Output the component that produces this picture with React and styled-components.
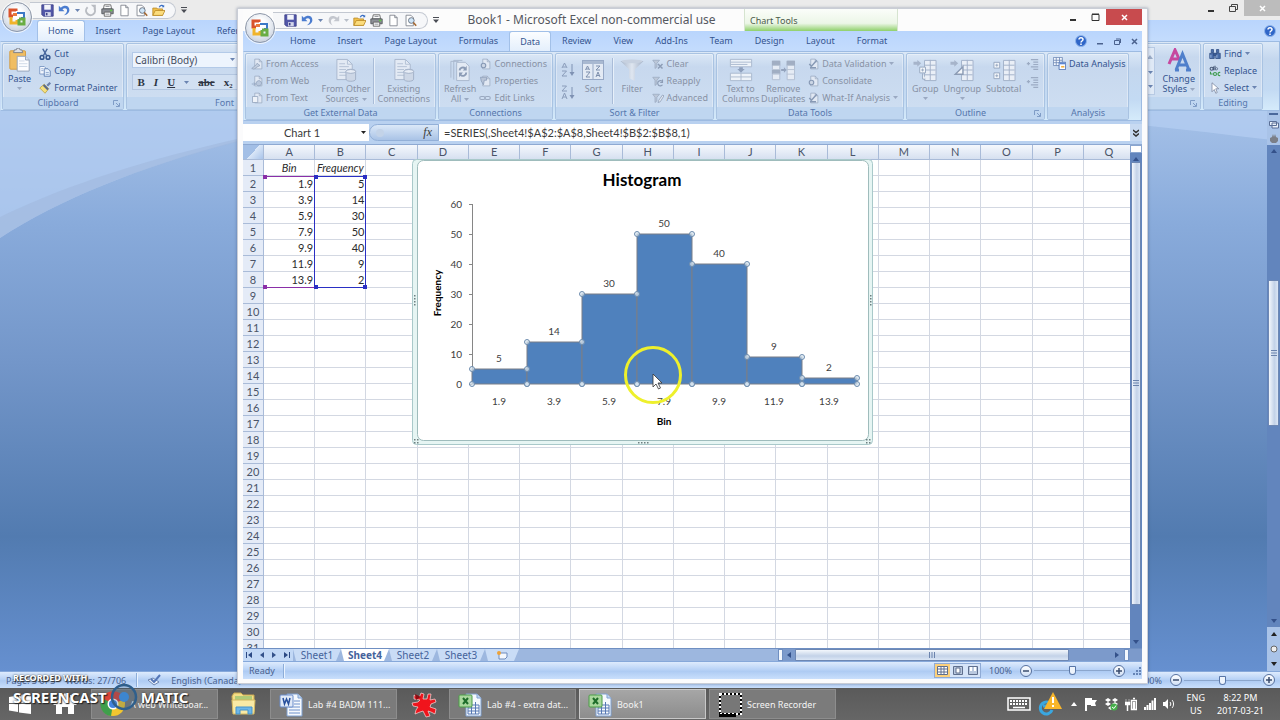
import { Fragment } from "react";
import styled, { createGlobalStyle, css } from "styled-components";

const UI = `"Noto Sans", "Open Sans", sans-serif`;
const SHEET = `Lato, "Open Sans", sans-serif`;
const INK = "#34548f";
const MUTED = "#8892a5";

const GlobalStyle = createGlobalStyle`
    * {
        box-sizing: border-box;
    }
    body {
        margin: 0;
        overflow: hidden;
        font-family: ${UI};
        font-size: 9px;
        color: ${INK};
    }
    button, input, select {
        font: inherit;
        color: inherit;
        background: none;
        border: 0;
        padding: 0;
        margin: 0;
    }
    svg {
        display: block;
        flex: none;
    }
`;

/* ---------- icons ---------- */

const Icon = ({ size = 13, children }) => (
    <svg width={size} height={size} viewBox="0 0 16 16" fill="none" aria-hidden="true">
        {children}
    </svg>
);

const SaveIcon = () => (
    <Icon>
        <path d="M1 1h14v14H3l-2-2z" fill="#5257a8" stroke="#3c3f86" />
        <path d="M4 1h8v6H4z" fill="#f3f5fb" />
        <path d="M5 10h7v5H5z" fill="#d3d6ea" />
        <path d="M6 11h2v3H6z" fill="#3c3f86" />
    </Icon>
);
const UndoIcon = () => (
    <Icon>
        <path d="M1 2v7h7L5.500 6.500C8 4 12 5 11 9c-.4 2-2 4-4 5 4-.5 7-3 7-6.500C14 2 8 .5 3.500 4.500z" fill="#4b7ccf" />
    </Icon>
);
const RepeatIcon = () => (
    <Icon>
        <path d="M4.500 4a5.500 5.500 0 1 0 8 1" stroke="#b9bcc2" strokeWidth="2.500" />
        <path d="M8.500 1h6v6z" fill="#b9bcc2" />
    </Icon>
);
const RedoIcon = () => (
    <Icon>
        <path d="M15 2v7H8l2.500-2.500C8 4 4 6 5 10c0 1 1 3 2 4-4-2-5-4-5-6C2 2 8 1 12.500 4.500z" fill="#c4c7ce" />
    </Icon>
);
const PrintIcon = () => (
    <Icon>
        <path d="M4 1h8l1 5H3z" fill="#fff" stroke="#555" />
        <path d="M1 6h14v6H1z" fill="#8d9097" stroke="#4c4f55" />
        <path d="M4 10h8v5H4z" fill="#fff" stroke="#555" />
        <path d="M11 7h3v2h-3z" fill="#62c04c" />
        <path d="M5.500 3h5M5.500 12.500h5" stroke="#7b8088" />
    </Icon>
);
const PageIcon = () => (
    <Icon>
        <path d="M3.500 1.500h6l3 3v10h-9z" fill="#fff" stroke="#777c86" />
        <path d="M9.500 1.500v3h3" stroke="#777c86" />
    </Icon>
);
const PreviewIcon = () => (
    <Icon>
        <path d="M2.500 1.500h6l3 3v10h-9z" fill="#fff" stroke="#777c86" />
        <circle cx="9" cy="8" r="3.500" fill="#cfe5f7" stroke="#5b6472" />
        <path d="M11.500 10.500l3.500 4" stroke="#a5672f" strokeWidth="2" />
    </Icon>
);
const FolderIcon = () => (
    <Icon>
        <path d="M1 5h5l1 1h6v8H1z" fill="#f2c04a" stroke="#b98a28" />
        <path d="M1 14l3-6h12l-3 6z" fill="#fbdc7d" stroke="#b98a28" />
        <path d="M9 4c1-3 4-3 5-1" stroke="#3b6fc4" strokeWidth="1.500" />
        <path d="M15 1v3h-3z" fill="#3b6fc4" />
    </Icon>
);
const Caret = ({ color = "#6b84b1" }) => (
    <svg width="5" height="3" viewBox="0 0 5 3" aria-hidden="true"><path d="M0 0h5L2.500 3z" fill={color} /></svg>
);
const MoreIcon = () => (
    <svg width="6" height="6" viewBox="0 0 6 6" aria-hidden="true"><path d="M0 0h6v1H0zM0 2.500h6L3 6z" fill="#4a4d55" /></svg>
);
const OfficeLogo = () => (
    <svg width="20" height="20" viewBox="0 0 20 20" fill="none" aria-hidden="true">
        <path d="M9 4V3H3v6h3" stroke="#d9532c" strokeWidth="3" />
        <path d="M10 6h7v5h-3" stroke="#3c79c6" strokeWidth="2" />
        <path d="M4 10v6h6v-3" stroke="#f0b32a" strokeWidth="3" />
        <path d="M12 17h5v-5h-5z" stroke="#69ad43" strokeWidth="3" />
        <path d="M6 6h4v3H6z" fill="#e8793c" />
        <path d="M9 9h3v3H9z" fill="#fff" />
    </svg>
);
const HelpIcon = () => (
    <svg width="12" height="12" viewBox="0 0 12 12" fill="none" aria-hidden="true">
        <circle cx="6" cy="6" r="5.500" fill="#2f66c8" stroke="#8fb4ea" />
        <path d="M4 4.500C4 2 8 2 8 4.500 8 6 6 6 6 7.500M6 8.500V10" stroke="#fff" strokeWidth="1.500" />
    </svg>
);
const LauncherIcon = () => (
    <svg width="7" height="7" viewBox="0 0 7 7" fill="none" aria-hidden="true">
        <path d="M.5 5V.5H5M3 3l3 3M6.500 3v3.500H3" stroke="#7f9cc6" />
    </svg>
);

const PasteIcon = () => (
    <svg width="23" height="24" viewBox="0 0 23 26" fill="none" aria-hidden="true">
        <rect x="1" y="3" width="17" height="20" rx="1" fill="#f0bd62" stroke="#d29b42" />
        <path d="M5 5l1-3h2a2 2 0 0 1 4 0h2l1 3z" fill="#dde0e6" stroke="#777d88" />
        <path d="M9 9h9l4 4v12H9z" fill="#fdfdff" stroke="#93a2b9" />
        <path d="M18 9v4h4" fill="#dbe5f3" stroke="#93a2b9" />
        <path d="M11 14h6M11 17h9M11 20h9" stroke="#ccd6e5" />
    </svg>
);
const CutIcon = () => (
    <Icon size={12}>
        <path d="M5 1l5 9M11 1L6 10" stroke="#46659c" strokeWidth="2" />
        <circle cx="4" cy="12.500" r="2.500" stroke="#35578f" strokeWidth="2" />
        <circle cx="12" cy="12.500" r="2.500" stroke="#35578f" strokeWidth="2" />
    </Icon>
);
const CopyIcon = () => (
    <Icon size={12}>
        <path d="M1 2h6l2 2v8H1z" fill="#f5f9ff" stroke="#6787b8" />
        <path d="M7 5h5l3 3v7H7z" fill="#e3eefb" stroke="#4a6ea8" />
        <path d="M3 5h3M3 7.500h3M9 10h4M9 12.500h4" stroke="#7d9ac4" />
    </Icon>
);
const BrushIcon = () => (
    <Icon size={12}>
        <path d="M11 5l4-4" stroke="#6a7faa" strokeWidth="3" />
        <path d="M7 3l6 6-5 6-7-7z" fill="#f6e07d" stroke="#b79c3b" />
        <path d="M6 4l6 6" stroke="#59698a" strokeWidth="2.500" />
    </Icon>
);
const StylesIcon = () => (
    <svg width="24" height="24" viewBox="0 0 24 24" fill="none" aria-hidden="true">
        <path d="M2 16L8 2l5 11M4.500 11h7" stroke="#c6489f" strokeWidth="3" />
        <path d="M9 22l6.500-16L22 22M11.500 17h9M8 22h4M19 22h5" stroke="#4f7fcb" strokeWidth="3" />
    </svg>
);
const FindIcon = () => (
    <Icon size={12}>
        <path d="M3 2h3v4H3zM10 2h3v4h-3zM1 7h6v7H1zM9 7h6v7H9zM6 7h4v3H6z" fill="#496da9" stroke="#2e4c82" />
        <path d="M2.500 9v4M10.500 9v4" stroke="#b6cef0" />
    </Icon>
);
const ReplaceIcon = () => (
    <Icon size={12}>
        <circle cx="3.500" cy="5" r="2" stroke="#4b5d7c" strokeWidth="1.500" />
        <path d="M6 2v5M8 1v6" stroke="#4b5d7c" strokeWidth="1.500" />
        <circle cx="10" cy="5" r="1.500" stroke="#4b5d7c" />
        <circle cx="8" cy="12" r="2" stroke="#3b9b4b" strokeWidth="1.500" />
        <path d="M15 10c-4-1-4 5 0 4M2 9v3h3" stroke="#3b9b4b" strokeWidth="1.500" />
    </Icon>
);
const PointerIcon = () => (
    <Icon size={12}><path d="M4 1v12l3-3 2 5 2-1-2-5h4z" fill="#fff" stroke="#75829b" /></Icon>
);

const G = "#9aa9c0";
const SmallDocIcon = ({ kind }) => (
    <Icon size={12}>
        <path d="M5 1.500h6l3.500 3.500v9.500H5z" fill="#e1e8f3" stroke={G} />
        <path d="M11 1.500V5h3.500" stroke={G} />
        {kind === "access" && <path d="M1 14l6-5 1-2 4 3-4 2-4 3z" fill="#c3cede" stroke="#8fa0ba" />}
        {kind === "web" && <path d="M10 7.500a3.500 3.500 0 1 0 1 0zM1 12h5M4 10l2 2-2 2" fill="#b9c7dc" stroke="#8a9cb8" />}
        {kind === "text" && <path d="M2 6h7v8H2z" fill="#eef2f8" stroke="#8fa0ba" />}
        {kind === "check" && <path d="M3 8l3 3 7-8M4 13h8" stroke="#8799b5" strokeWidth="2" />}
        {kind === "gear" && <circle cx="6" cy="10" r="3" fill="#ccd6e5" stroke="#8799b5" strokeWidth="1.500" />}
        {kind === "hand" && <path d="M2 3h8v4H7l-1 6-3-5z" fill="#b9c5d8" stroke="#8799b5" />}
    </Icon>
);
const LinkIcon = () => (
    <Icon size={12}>
        <rect x="1" y="6" width="7" height="4" rx="2" stroke={G} strokeWidth="1.500" />
        <rect x="8" y="6" width="7" height="4" rx="2" stroke={G} strokeWidth="1.500" />
    </Icon>
);
const FunnelSmall = ({ kind }) => (
    <Icon size={12}>
        <path d="M1 3h9L6.500 7v5L4 14V7z" fill="#bcc7d8" stroke={G} />
        {kind === "clear" && <path d="M8 8l6 6M14 8l-6 6" stroke="#8c9cb5" strokeWidth="2" />}
        {kind === "reapply" && <path d="M14 9a3.500 3.500 0 1 0 0 4M14 6v4h-3" stroke="#8c9cb5" strokeWidth="1.500" />}
        {kind === "advanced" && <path d="M8 14l1-3 5-7 2 1-5 8z" fill="#e2e8f1" stroke="#8c9cb5" />}
    </Icon>
);
const DbPageIcon = () => (
    <svg width="24" height="24" viewBox="0 0 24 25" fill="none" aria-hidden="true">
        <path d="M2.500 1.500h11l5 5v16h-16z" fill="#e3eaf4" stroke="#a9b8ce" />
        <path d="M13.500 1.500v5h5M5 6h6M5 9h10M5 12h7M5 15h7M5 18h7" stroke="#b4c1d5" />
        <path d="M12 14c0-3 10-3 10 0v8c0 3-10 3-10 0z" fill="#cdd7e6" stroke="#a2b1c8" />
        <ellipse cx="17" cy="14" rx="5" ry="2" fill="#e7edf6" stroke="#a2b1c8" />
    </svg>
);
const RefreshIcon = () => (
    <svg width="24" height="24" viewBox="0 0 24 25" fill="none" aria-hidden="true">
        <path d="M2.500 20.500v-17h8M5.500 22.500v-20h9" stroke="#a9b8ce" />
        <path d="M8.500 4.500h9l4 4v15h-13z" fill="#e3eaf4" stroke="#a9b8ce" />
        <path d="M11.500 13a3.500 3.500 0 0 1 6-2M18.500 15a3.500 3.500 0 0 1-6 2.500" stroke="#8b9bb5" strokeWidth="2" />
        <path d="M19 8v5h-4zM11 20v-5h4z" fill="#8b9bb5" />
    </svg>
);
const SortIcon = () => (
    <svg width="24" height="24" viewBox="0 0 24 24" fill="none" aria-hidden="true">
        <rect x="1.500" y="2.500" width="21" height="19" fill="#e3eaf4" stroke="#97a9c6" />
        <path d="M2 3h20v3H2z" fill="#a9b9d1" />
        <path d="M12 6v16" stroke="#97a9c6" />
        <path d="M4.500 12L6.500 8l2 4M5 11h3M15 8h4l-4 4h4M5 14h4l-4 5h4M15 19l2-5 2 5M15.500 17.500h3" stroke="#7f90ad" />
    </svg>
);
const AzIcon = ({ down }) => (
    <svg width="14" height="15" viewBox="0 0 14 15" fill="none" aria-hidden="true">
        {down
            ? <path d="M1 6l2.500-5L6 6M2 5h3M1 9h4.500L1 14h5" stroke="#8a9cba" />
            : <path d="M1 1h4.500L1 6h5M1 14l2.500-6L6 14M2 12h3" stroke="#8a9cba" />}
        <path d="M11 2v10" stroke="#7f92b3" />
        <path d="M8.500 10h5L11 14z" fill="#7f92b3" />
    </svg>
);
const FunnelIcon = () => (
    <svg width="26" height="24" viewBox="0 0 26 25" fill="none" aria-hidden="true">
        <defs>
            <linearGradient id="funnel"><stop stopColor="#a7b5ca" /><stop offset=".5" stopColor="#dfe6f0" /><stop offset="1" stopColor="#a3b1c7" /></linearGradient>
        </defs>
        <path d="M1 3h24l-9 9v12l-6-3v-9z" fill="url(#funnel)" />
        <ellipse cx="13" cy="3.500" rx="11" ry="2" fill="#c7d1e0" />
    </svg>
);
const TextColumnsIcon = () => (
    <svg width="26" height="24" viewBox="0 0 26 26" fill="none" aria-hidden="true">
        <path d="M1.500 1.500h23v8h-23zM1.500 16.500h23v8h-23z" fill="#eef3f9" stroke="#a9b8ce" />
        <path d="M2 4.500h22M2 7h18M2 20.500h22M13 16.500v8" stroke="#a9b8ce" />
        <path d="M11 10h4v2h2l-4 4-4-4h2z" fill="#8fa0bc" />
    </svg>
);
const DuplicatesIcon = () => (
    <svg width="28" height="24" viewBox="0 0 28 26" fill="none" aria-hidden="true">
        <path d="M2.500 3.500h8v20h-8zM18.500 3.500h8v20h-8z" fill="#e6ecf5" stroke="#b0bdd1" />
        <path d="M2 3h9v5H2zM2 13h9v4H2zM18 3h9v5h-9z" fill="#a1aec3" />
        <path d="M3 8h8M3 12.500h8M3 17.500h8M18 8h8M18 12.500h8M18 17.500h8" stroke="#b6c2d4" />
        <path d="M12 12h3v-2l3 3-3 3v-2h-3z" fill="#93a3bd" />
    </svg>
);
const GroupIcon = ({ kind }) => (
    <svg width="26" height="24" viewBox="0 0 26 25" fill="none" aria-hidden="true">
        <path d="M12.500 2.500h12v21h-12z" fill="#eaeff7" stroke="#a3b2ca" />
        <path d="M12 7.500h12M12 12.500h12M12 17.500h12M18.500 2v21" stroke="#a3b2ca" />
        {kind !== "subtotal" && <path d="M1 4h4V2l4 3.500L5 9V7H1z" fill="#a6b4ca" />}
        {kind === "group" && <path d="M7.500 9.500h6v6h-6zM9 12.500h3M10.500 11v3M10.500 16v6h3" fill="#f4f7fb" stroke="#97a7c0" />}
        {kind === "ungroup" && <path d="M6 17l8-8v8z" fill="#f4f7fb" stroke="#8c9cb5" strokeWidth="1.500" />}
        {kind === "subtotal" && <path d="M2.500 4.500h6v6h-6zM4 7.500h3M5.500 6v3M2.500 15.500h6v6h-6zM4 18.500h3M5.500 17v3" fill="#f4f7fb" stroke="#97a7c0" />}
    </svg>
);
const DetailIcon = () => (
    <Icon size={13}>
        <path d="M1 7h4M3 5v4M6 2h9M9 5h6M9 8h6M6 11h9M9 14h6" stroke="#9cabc3" strokeWidth="1.500" />
    </Icon>
);
const AnalysisIcon = () => (
    <Icon>
        <path d="M.5.5h11v10H.5zM.5 4h11M4 .5v10M8 .5v10M.5 7h11" fill="#f3f7fd" stroke="#6c87b5" />
        <path d="M7.500 6.500h8v9h-8z" fill="#fff" stroke="#3f66ae" />
        <path d="M8 7h7v2H8z" fill="#5b86d1" />
        <path d="M10 12h4" stroke="#f2b13e" strokeWidth="2" />
    </Icon>
);

/* ---------- shared window parts ---------- */

const Desktop = styled.main`
    position: relative;
    display: flex;
    flex-direction: column;
    height: 100vh;
    background: #606060;
`;

const WordWindow = styled.section`
    flex: 1;
    min-height: 0;
    display: flex;
    flex-direction: column;
    position: relative;
    background: #bfdbff;
`;

const ExcelWindow = styled.section`
    position: absolute;
    top: 8px;
    left: 237px;
    right: 132px;
    bottom: 36px;
    display: flex;
    flex-direction: column;
    padding: 0 5px 4px;
    background: #fbfbfc;
    border: 1px solid #c9cdd6;
    box-shadow: 0 0 3px rgba(30, 50, 90, 0.4);
`;

const TitleBar = styled.header`
    display: flex;
    align-items: center;
    height: ${props => (props.$active ? 22 : 20)}px;
    padding-left: 30px;
    background: ${props => (props.$active ? "#fcfcfc" : "#ebebeb")};
`;

const OfficeButton = styled.button`
    position: absolute;
    top: ${props => (props.$active ? 4 : 2)}px;
    left: ${props => (props.$active ? 7 : 2)}px;
    z-index: 2;
    display: grid;
    place-items: center;
    width: 30px;
    height: 30px;
    border-radius: 50%;
    border: 1px solid #8d97a8;
    background: radial-gradient(circle at 50% 35%, #ffffff 20%, #dde3ec 60%, #b7c0cf);
    box-shadow: 0 0 0 1px rgba(255, 255, 255, 0.7);
`;

const QuickAccess = styled.div`
    display: flex;
    align-items: center;
    gap: 4px;
    height: 17px;
    padding: 0 10px 0 11px;
    border: 1px solid #c3c8d1;
    border-left: 0;
    border-radius: 0 9px 9px 0;
    background: #f6f7f9;
    margin-right: 5px;
    button {
        display: grid;
        place-items: center;
    }
`;

const Title = styled.h1`
    flex: 1;
    margin: 0;
    text-align: center;
    font-size: 12px;
    line-height: 22px;
    font-weight: 400;
    color: #55585f;
    white-space: nowrap;
`;

const ChartTools = styled.div`
    width: 154px;
    height: 22px;
    padding-left: 5px;
    line-height: 24px;
    color: #4b5a4b;
    border: solid #d6e4d0;
    border-width: 0 1px;
    background: linear-gradient(#fbfdfa, #ecf6e7 65%, #8fd06a);
`;

const Controls = styled.div`
    display: flex;
    justify-content: flex-end;
    align-self: flex-start;
    flex: ${props => (props.$active ? "0 0 244px" : "1")};
`;

const ControlButton = styled.button`
    display: grid;
    place-items: center;
    width: ${props => (props.$close ? 36 : 22)}px;
    height: 16px;
    ${props => props.$close && css`
        background: ${props.$close};
    `}
`;

const TabStrip = styled.nav`
    display: flex;
    height: ${props => (props.$active ? 20 : 21)}px;
    padding-left: ${props => (props.$active ? 36 : 37)}px;
    background: linear-gradient(#b9d5fd, #c4dcfd);
`;

const Tab = styled.button`
    padding: 0 11px;
    line-height: 18px;
    white-space: nowrap;
    color: ${INK};
    border: 0 solid #a2c0e8;
    ${props => props.$on && css`
        padding: 0 10px;
        background: linear-gradient(#fbfdff, #e4effc);
        border-width: 1px 1px 0;
        border-radius: 3px 3px 0 0;
    `}
`;

const TabTools = styled.div`
    display: flex;
    align-items: center;
    gap: 10px;
    margin-left: auto;
    padding-right: 4px;
`;

const Ribbon = styled.div`
    display: flex;
    gap: 2px;
    height: 70px;
    padding: 1px 1px 0;
    border: 1px solid #9dbbe2;
    border-left-color: #c7dcf6;
    background: linear-gradient(#dbe8f7, #c4d7ee 25%, #c3daf3 70%, #d5ebfb);
`;

const Group = styled.section`
    display: flex;
    flex-direction: column;
    flex: 0 0 ${props => props.$w}px;
    min-width: 0;
    border: 1px solid #a9c3e2;
    border-radius: 2px;
    background: linear-gradient(#dae7f6, #c7d8ee 20%, #cfdff2);
    box-shadow: inset 0 0 0 1px rgba(255, 255, 255, 0.35);
    ${props => !props.$enabled && css`
        color: ${MUTED};
    `}
    footer {
        display: flex;
        align-items: center;
        justify-content: center;
        height: 12px;
        line-height: 12px;
        color: #5677ad;
        background: #bfd6f0;
    }
    footer svg {
        margin-right: 3px;
    }
    footer span {
        flex: 1;
        text-align: center;
    }
`;

const GroupBody = styled.div`
    flex: 1;
    min-height: 0;
    display: flex;
    align-items: stretch;
    gap: ${props => (props.$start ? 8 : 0)}px;
    justify-content: ${props => (props.$start ? "flex-start" : "space-between")};
    padding: 1px 5px 0;
`;

const Stack = styled.div`
    display: flex;
    flex-direction: column;
    justify-content: ${props => (props.$even ? "space-evenly" : "flex-start")};
`;

const SmallButton = styled.button`
    display: flex;
    align-items: center;
    gap: 3px;
    line-height: 17px;
    white-space: nowrap;
    color: inherit;
    text-align: left;
`;

const BigButton = styled.button`
    display: flex;
    flex-direction: column;
    align-items: center;
    padding-top: 3px;
    line-height: 10px;
    white-space: nowrap;
    > svg {
        margin-bottom: 2px;
    }
    span {
        display: flex;
        align-items: center;
        gap: 3px;
        min-height: 8px;
    }
`;

const Divider = styled.i`
    width: 1px;
    margin: 3px 0;
    background: #a9bcd8;
    box-shadow: 1px 0 #e7f0fa;
`;

const Big = ({ icon, lines, menu }) => (
    <BigButton type="button">
        {icon}
        {lines.map((line, i) => (
            <span key={line}>{line}{menu === "inline" && i === lines.length - 1 && <Caret color="#9aa9c2" />}</span>
        ))}
        {menu === "below" && <span><Caret color="#9aa9c2" /></span>}
    </BigButton>
);

const RibbonGroup = ({ label, width, enabled, launcher, start, children }) => (
    <Group $w={width} $enabled={enabled} aria-label={label}>
        <GroupBody $start={start}>{children}</GroupBody>
        <footer><span>{label}</span>{launcher && <LauncherIcon />}</footer>
    </Group>
);

const WindowButtons = ({ active }) => (
    <Controls $active={active}>
        <ControlButton type="button" aria-label="Minimize">
            <svg width="8" height="8" viewBox="0 0 8 8"><path d="M1 6h6v2H1z" fill="#333" /></svg>
        </ControlButton>
        <ControlButton type="button" aria-label="Restore">
            <svg width="9" height="8" viewBox="0 0 9 8" fill="none">
                {active ? <path d="M1 1.500h7v6H1zM1 1h7" stroke="#333" /> : <path d="M.5 2.500h6v5h-6zM2.500 2V.5h6v5H7" stroke="#444" />}
            </svg>
        </ControlButton>
        <ControlButton type="button" aria-label="Close" $close={active ? "#c84b4e" : "#bcbcbc"}>
            <svg width="7" height="7" viewBox="0 0 7 7"><path d="M1 1l5 5M6 1L1 6" stroke="#fff" strokeWidth="1.500" /></svg>
        </ControlButton>
    </Controls>
);

/* ---------- Word ---------- */

const RibbonFill = styled.div`
    flex: 1;
`;

const RibbonEnd = styled.div`
    flex: 0 0 13px;
`;

const FontBox = styled.div`
    display: flex;
    flex-direction: column;
    justify-content: space-evenly;
    width: 106px;
`;

const FontSelect = styled.label`
    display: flex;
    align-items: center;
    height: 16px;
    padding: 0 2px;
    background: #edf4fd;
    border: 1px solid #b3cae8;
    select {
        flex: 1;
        appearance: none;
        font-size: 10px;
        color: #444d5e;
    }
`;

const FontButtons = styled.div`
    display: flex;
    align-items: center;
    justify-content: space-around;
    height: 16px;
    font-family: "Liberation Serif", serif;
    font-weight: 700;
    font-size: 11px;
    color: #2d3443;
    border: 1px solid #b3c6e0;
    background: #d2e0f2;
`;

const Pick = styled.button`
    font-style: ${props => (props.$italic ? "italic" : "normal")};
    text-decoration: ${props => props.$line || "none"};
`;

const Gallery = styled.div`
    display: flex;
    flex-direction: column;
    justify-content: space-around;
    align-items: center;
    width: 10px;
    margin: 2px 0;
    background: #dfe9f6;
    border: 1px solid #b7cae4;
`;

const Paper = styled.div`
    position: relative;
    flex: 1;
    min-height: 0;
    display: flex;
    justify-content: flex-end;
    background: linear-gradient(#a5c1e8, #89abdb 20%, #7396c9 45%, #527bb0 76%, #6690d0);
    > svg {
        position: absolute;
        inset: 0;
        width: 100%;
        height: 100%;
    }
`;

const SideBar = styled.div`
    position: relative;
    display: flex;
    flex-direction: column;
    align-items: center;
    width: 13px;
    background: #a9c3e8;
`;

const SideTools = styled.div`
    display: flex;
    flex-direction: column;
    align-items: center;
    justify-content: space-around;
    width: 100%;
    height: ${props => props.$h}px;
    flex: none;
`;

const Track = styled.div`
    flex: 1;
    min-height: 0;
    display: flex;
    flex-direction: column;
    align-items: center;
    width: 100%;
    padding: 3px 1px;
    background: #6285bd;
`;

const Thumb = styled.div`
    flex: ${props => props.$size} 0 0;
    width: 100%;
    border: 1px solid #6d87b3;
    border-radius: 1px;
    display: grid;
    place-items: center;
    background: linear-gradient(${props => (props.$flat ? "180deg" : "90deg")}, #f3f7fc, #c3d2e8 60%, #dbe6f5);
    ${props => props.$flat && css`
        height: 100%;
    `}
`;

const Space = styled.div`
    flex: ${props => props.$size} 0 0;
`;

const ArrowSlot = styled.div`
    display: grid;
    place-items: center;
    flex: 0 0 ${props => props.$w}px;
`;

const Arrow = ({ dir = "up", color = "#34518a" }) => {
    const d = { up: "M0 5l3-4 3 4z", down: "M0 1h6L3 5z", left: "M5 0v6L1 3z", right: "M1 0v6l4-3z" }[dir];
    return <svg width="6" height="6" viewBox="0 0 6 6" aria-hidden="true"><path d={d} fill={color} /></svg>;
};

const StatusBar = styled.footer`
    display: flex;
    align-items: center;
    gap: ${props => (props.$active ? 8 : 10)}px;
    flex: none;
    height: ${props => (props.$active ? 18 : 17)}px;
    padding: 0 ${props => (props.$active ? 1 : 5)}px 0 6px;
    color: #4a628f;
    white-space: nowrap;
    border-top: 1px solid #86a8da;
    background: linear-gradient(#deebfd, #b8d2f6 45%, #aecbf3 55%, #c9dffc);
`;

const StatusRule = styled.i`
    width: 1px;
    height: 14px;
    background: #8dadd9;
    box-shadow: 1px 0 #e9f3ff;
`;

const Zoom = styled.div`
    display: flex;
    align-items: center;
    gap: 2px;
    margin-left: auto;
    label {
        margin-right: 6px;
    }
    input {
        appearance: none;
        width: 77px;
        height: 12px;
        background: linear-gradient(#8ba6cd, #8ba6cd) center / 100% 1px no-repeat;
    }
    input::-webkit-slider-thumb {
        appearance: none;
        width: 7px;
        height: 9px;
        background: #eef4fc;
        border: 1px solid #5876a8;
        border-radius: 1px 1px 4px 4px;
    }
`;

const RoundButton = styled.button`
    display: grid;
    place-items: center;
    width: 12px;
    height: 12px;
    border: 1px solid #57719f;
    border-radius: 50%;
    background: linear-gradient(#ffffff, #cfdff5);
`;

const ZoomControl = ({ id }) => (
    <Zoom>
        <label htmlFor={id}>100%</label>
        <RoundButton type="button" aria-label="Zoom out">
            <svg width="8" height="8" viewBox="0 0 8 8"><path d="M1 4h6" stroke="#3a4c6e" strokeWidth="1.500" /></svg>
        </RoundButton>
        <input id={id} type="range" min="0" max="100" defaultValue="50" />
        <RoundButton type="button" aria-label="Zoom in">
            <svg width="8" height="8" viewBox="0 0 8 8"><path d="M1 4h6M4 1v6" stroke="#3a4c6e" strokeWidth="1.500" /></svg>
        </RoundButton>
    </Zoom>
);

const Word = () => (
    <WordWindow aria-label="Document">
        <OfficeButton type="button" aria-label="Office menu"><OfficeLogo /></OfficeButton>
        <TitleBar>
            <QuickAccess>
                <button type="button" aria-label="Save"><SaveIcon /></button>
                <button type="button" aria-label="Undo"><UndoIcon /></button>
                <Caret />
                <button type="button" aria-label="Repeat"><RepeatIcon /></button>
                <button type="button" aria-label="Print"><PrintIcon /></button>
                <button type="button" aria-label="New"><PageIcon /></button>
                <button type="button" aria-label="Preview"><PreviewIcon /></button>
                <button type="button" aria-label="Open"><FolderIcon /></button>
            </QuickAccess>
            <MoreIcon />
            <WindowButtons />
        </TitleBar>
        <TabStrip>
            <Tab type="button" $on>Home</Tab>
            <Tab type="button">Insert</Tab>
            <Tab type="button">Page Layout</Tab>
            <Tab type="button">References</Tab>
            <TabTools><HelpIcon /></TabTools>
        </TabStrip>
        <Ribbon>
            <RibbonGroup label="Clipboard" width={122} enabled launcher start>
                <Big icon={<PasteIcon />} lines={["Paste"]} menu="below" />
                <Stack>
                    <SmallButton type="button"><CutIcon />Cut</SmallButton>
                    <SmallButton type="button"><CopyIcon />Copy</SmallButton>
                    <SmallButton type="button"><BrushIcon />Format Painter</SmallButton>
                </Stack>
            </RibbonGroup>
            <RibbonGroup label="Font" width={197} enabled start>
                <FontBox>
                    <FontSelect>
                        <select aria-label="Font" defaultValue="Calibri (Body)"><option>Calibri (Body)</option></select>
                        <Caret />
                    </FontSelect>
                    <FontButtons>
                        <Pick type="button">B</Pick>
                        <Pick type="button" $italic>I</Pick>
                        <Pick type="button" $line="underline">U</Pick>
                        <Caret />
                        <Pick type="button" $line="line-through">abc</Pick>
                        <Pick type="button">x₂</Pick>
                    </FontButtons>
                </FontBox>
            </RibbonGroup>
            <RibbonFill />
            <RibbonGroup label="" width={62} enabled launcher>
                <Gallery><Arrow color="#9aabc6" /><Caret /><Caret /></Gallery>
                <Big icon={<StylesIcon />} lines={["Change", "Styles"]} menu="inline" />
            </RibbonGroup>
            <RibbonGroup label="Editing" width={60} enabled start>
                <Stack>
                    <SmallButton type="button"><FindIcon />Find <Caret /></SmallButton>
                    <SmallButton type="button"><ReplaceIcon />Replace</SmallButton>
                    <SmallButton type="button"><PointerIcon />Select <Caret /></SmallButton>
                </Stack>
            </RibbonGroup>
            <RibbonEnd />
        </Ribbon>
        <Paper>
            <svg viewBox="0 0 1280 560" preserveAspectRatio="none" aria-hidden="true">
                <path d="M0 0H1280V30C880-20 500-40 237 30 140 56 60 88 0 127z" fill="#b4cef1" opacity=".75" />
                <path d="M0 106C70 72 150 48 237 28V31C140 56 60 88 0 127z" fill="#a3bbdf" opacity=".7" />
            </svg>
            <SideBar>
                <SideTools $h={34}>
                    <svg width="9" height="2" viewBox="0 0 9 2"><path d="M0 0h9v2H0z" fill="#4a689c" /></svg>
                    <svg width="10" height="9" viewBox="0 0 10 9" fill="none"><path d="M.5 1.500h7v4h-7zM3 3h6.500v5H3z" fill="#e8f0fa" stroke="#5a6f96" /></svg>
                    <svg width="10" height="9" viewBox="0 0 10 9"><path d="M1 4l2-1 1-3 1 3 1-3 1 3 2 1v3L7 9H3L1 7z" fill="#7b7f88" /></svg>
                </SideTools>
                <Track>
                    <Arrow />
                    <Space $size={126} />
                    <Thumb $size={144}><svg width="6" height="6" viewBox="0 0 6 6"><path d="M0 .5h6M0 3h6M0 5.500h6" stroke="#6b83ad" /></svg></Thumb>
                    <Space $size={192} />
                    <Arrow dir="down" />
                </Track>
                <SideTools $h={44}>
                    <Arrow color="#222" />
                    <svg width="8" height="8" viewBox="0 0 8 8"><circle cx="4" cy="4" r="3" fill="#eee" stroke="#666" /></svg>
                    <Arrow dir="down" color="#222" />
                </SideTools>
            </SideBar>
        </Paper>
        <StatusBar>
            <span>Page: 3 of 3</span>
            <span>Words: 27/706</span>
            <StatusRule />
            <svg width="14" height="12" viewBox="0 0 14 12" fill="none" aria-hidden="true">
                <path d="M1 6l5-2 6 4-5 3z" fill="#eef4fc" stroke="#6d85b0" />
                <path d="M4 5l3 3 6-7" stroke="#5577b8" strokeWidth="2" />
            </svg>
            <span>English (Canada)</span>
            <ZoomControl id="word-zoom" />
        </StatusBar>
    </WordWindow>
);

/* ---------- Excel ---------- */

const FormulaRow = styled.div`
    display: flex;
    height: 24px;
    padding: 3px 0;
    background: #b9d1f0;
    border-bottom: 1px solid #8ea9d2;
    font-family: ${SHEET};
    font-size: 11px;
    color: #3a3a3a;
`;

const NameBox = styled.div`
    display: flex;
    align-items: center;
    width: 126px;
    padding-right: 3px;
    background: #fff;
    input {
        flex: 1;
        min-width: 0;
        text-align: center;
    }
`;

const FxBox = styled.div`
    display: flex;
    align-items: center;
    justify-content: space-between;
    width: 70px;
    padding: 0 6px;
    border: 1px solid #93b0d8;
    border-radius: 9px 0 0 9px;
    background: linear-gradient(#dbe8f8, #a9c3e6);
    font: italic 12px "Liberation Serif", serif;
    &::before {
        content: "";
        width: 8px;
        height: 8px;
        border-radius: 50%;
        background: #c3d3e8;
    }
`;

const FormulaField = styled.div`
    flex: 1;
    display: flex;
    padding-left: 5px;
    background: #fff;
    input {
        flex: 1;
    }
`;

const ExpandButton = styled.button`
    && {
        width: 12px;
        display: grid;
        place-items: center;
        background: #c8daf2;
    }
`;

const SheetArea = styled.div`
    flex: 1;
    min-height: 0;
    display: flex;
`;

const SheetView = styled.div`
    position: relative;
    flex: 1;
    min-width: 0;
    overflow: hidden;
    background: #fff;
`;

const Grid = styled.table`
    table-layout: fixed;
    width: calc(100% + 5px);
    border-collapse: separate;
    border-spacing: 0;
    font-family: ${SHEET};
    font-size: 11px;
    color: #2c2c2c;
    th, td {
        height: 16px;
        padding: 0 1px;
        line-height: 15px;
        border: solid #d3d8e2;
        border-width: 0 1px 1px 0;
        overflow: hidden;
        white-space: nowrap;
    }
    th {
        font-weight: 400;
        color: #4a5468;
        text-align: center;
        background: #e4ebf7;
        border-color: #a9bbd8;
    }
    thead th {
        height: 15px;
        line-height: 14px;
        background: linear-gradient(#f5f8fd, #d6e0f0);
    }
    thead th:first-child {
        width: 21px;
        background: linear-gradient(135deg, #a3bfe6 50%, #dce8f8 50%, #a9c4ea);
    }
`;

const Cell = styled.td`
    text-align: ${props => (props.$head ? "center" : "right")};
    font-style: ${props => (props.$head ? "italic" : "normal")};
`;

const RangeOutline = styled.div`
    position: absolute;
    top: 31px;
    left: ${props => props.$left}px;
    width: 52px;
    height: 112px;
    border: solid ${props => props.$color};
    border-width: ${props => (props.$open ? "1px 0" : "1px")};
    i {
        position: absolute;
        width: 4px;
        height: 4px;
        background: ${props => props.$color};
    }
    i:nth-child(odd) { left: -1px; }
    i:nth-child(even) { right: -2px; }
    i:nth-child(-n + 2) { top: -2px; }
    i:nth-child(n + 3) { bottom: -2px; }
`;

const ChartFrame = styled.figure`
    position: absolute;
    top: 14px;
    left: 169px;
    margin: 0;
    text {
        font-family: ${SHEET};
        font-size: 10px;
        fill: #404040;
    }
    text.heading {
        font-size: 17px;
        font-weight: 700;
        fill: #000;
    }
    text.axis {
        font-weight: 700;
        fill: #000;
    }
`;

const VScroll = styled.div`
    display: flex;
    flex-direction: column;
    width: 12px;
    &::before {
        content: "";
        height: 6px;
        background: #fff;
        border: 1px solid #8aa6d0;
    }
`;

const TabBar = styled.div`
    display: flex;
    flex: none;
    height: 13px;
    font-size: 10px;
    background: #9db7df;
    border-top: 1px solid #6f8fc2;
`;

const TabNav = styled.div`
    display: flex;
    align-items: center;
    justify-content: space-around;
    width: 50px;
    background: #c2d8f6;
`;

const SheetTab = styled.button`
    display: grid;
    place-items: center;
    width: ${props => (props.$short ? 34 : 48)}px;
    height: 12px;
    line-height: 12px;
    font-weight: ${props => (props.$on ? 700 : 400)};
    color: #45639b;
    background: ${props => (props.$on ? "#ffffff" : "#c9dcf6")};
    clip-path: polygon(0 0, 100% 0, calc(100% - 5px) 100%, 3px 100%);
`;

const HScroll = styled.div`
    display: flex;
    align-items: center;
    width: 364px;
    margin-left: auto;
    padding-right: 13px;
    background: #7c9acb;
`;

const SplitHandle = styled.i`
    width: 5px;
    height: 100%;
    background: #f4f8fe;
    border: 1px solid #6f8fc2;
`;

const ViewButtons = styled.div`
    display: flex;
    height: 15px;
    border: 1px solid #8fabd6;
    margin-left: auto;
    & + div {
        margin-left: 0;
    }
`;

const ViewButton = styled.button`
    display: grid;
    place-items: center;
    width: 15px;
    background: ${props => (props.$on ? "#fbd07c" : "#d6e4f8")};
`;

const DetailButtons = styled.div`
    display: flex;
    flex-direction: column;
    gap: 5px;
    padding-top: 3px;
`;

const columns = "ABCDEFGHIJKLMNOPQ".split("");
const rows = Array.from({ length: 31 }, (_, i) => i + 1);
const bins = [
    { bin: "1.9", count: 5 },
    { bin: "3.9", count: 14 },
    { bin: "5.9", count: 30 },
    { bin: "7.9", count: 50 },
    { bin: "9.9", count: 40 },
    { bin: "11.9", count: 9 },
    { bin: "13.9", count: 2 },
];

const cellText = (row, col) => {
    if (row === 1) return ["Bin", "Frequency"][col];
    const item = bins[row - 2];
    return item ? [item.bin, item.count][col] : undefined;
};

const BAR = 55;
const LEFT = 60;
const BASE = 225;

const Dots = ({ x, y, vertical }) => (
    <g fill="#6c7f80">
        {[0, 3, 6, 9].map(n => <rect key={n} x={vertical ? x : x + n} y={vertical ? y + n : y} width="1.500" height="1.500" />)}
    </g>
);

const CornerDots = ({ x, y }) => (
    <path d={`M${x} ${y}h1.500v1.500h-1.500zM${x + 3} ${y}h1.500v1.500h-1.500zM${x} ${y + 3}h1.500v1.500h-1.500zM${x + 3} ${y + 3}h1.500v1.500h-1.500z`} fill="#6c7f80" />
);

const Histogram = () => (
    <ChartFrame>
        <svg width="462" height="288" viewBox="0 0 462 288" role="img" aria-label="Histogram of frequency by bin">
            <rect x=".5" y=".5" width="460" height="285" rx="4" fill="#e6f5f3" stroke="#a9c9ca" />
            <rect x="5.500" y="1.500" width="451" height="280" rx="6" fill="#fff" stroke="#9fbcbc" />
            <Dots x={2} y={136} vertical />
            <Dots x={458} y={136} vertical />
            <Dots x={226} y={283} />
            <CornerDots x={2} y={280} />
            <CornerDots x={454} y={280} />
            <text className="heading" x="230" y="27" textAnchor="middle">Histogram</text>
            <text className="axis" x="252" y="266" textAnchor="middle">Bin</text>
            <text className="axis" transform="translate(29 134) rotate(-90)" textAnchor="middle">Frequency</text>
            <path d="M60.500 45v180" stroke="#868686" />
            {[0, 10, 20, 30, 40, 50, 60].map(v => (
                <Fragment key={v}>
                    <path d={`M57 ${BASE - v * 3 + 0.5}h3`} stroke="#868686" />
                    <text x="50" y={BASE - v * 3 + 4} textAnchor="end">{v}</text>
                </Fragment>
            ))}
            {bins.map(({ bin, count }, i) => {
                const x = LEFT + i * BAR;
                return (
                    <Fragment key={bin}>
                        <rect x={x} y={BASE - count * 3} width={BAR} height={count * 3} fill="#4f81bd" stroke="#7a7f88" />
                        <text x={x + 27} y={BASE - count * 3 - 7} textAnchor="middle">{count}</text>
                        <text x={x + 27} y="246" textAnchor="middle">{bin}</text>
                    </Fragment>
                );
            })}
            {bins.map(({ bin, count }, i) => {
                const x = LEFT + i * BAR;
                return (
                    <g key={bin} fill="#dbe9f5" fillOpacity=".7" stroke="#6d8cae">
                        <circle cx={x} cy={BASE - count * 3} r="2.500" />
                        <circle cx={x + BAR} cy={BASE - count * 3} r="2.500" />
                        <circle cx={x} cy={BASE} r="2.500" />
                        <circle cx={x + BAR} cy={BASE} r="2.500" />
                    </g>
                );
            })}
            <circle cx="241" cy="216" r="27.500" fill="none" stroke="#eef02c" strokeWidth="3" />
            <path d="M241 215v13l3-3 2.500 5 2-1-2.500-5h4z" fill="#fff" stroke="#333" strokeWidth=".8" />
        </svg>
    </ChartFrame>
);

const Excel = () => (
    <ExcelWindow aria-label="Book1">
        <OfficeButton type="button" aria-label="Office menu" $active><OfficeLogo /></OfficeButton>
        <TitleBar $active>
            <QuickAccess>
                <button type="button" aria-label="Save"><SaveIcon /></button>
                <button type="button" aria-label="Undo"><UndoIcon /></button>
                <Caret />
                <button type="button" aria-label="Redo"><RedoIcon /></button>
                <Caret color="#b9bfc9" />
                <button type="button" aria-label="Open"><FolderIcon /></button>
                <button type="button" aria-label="Print"><PrintIcon /></button>
                <button type="button" aria-label="New"><PageIcon /></button>
                <button type="button" aria-label="Preview"><PreviewIcon /></button>
            </QuickAccess>
            <MoreIcon />
            <Title>Book1 - Microsoft Excel non-commercial use</Title>
            <ChartTools>Chart Tools</ChartTools>
            <WindowButtons active />
        </TitleBar>
        <TabStrip $active>
            {["Home", "Insert", "Page Layout", "Formulas", "Data", "Review", "View", "Add-Ins", "Team", "Design", "Layout", "Format"].map(name => (
                <Tab key={name} type="button" $on={name === "Data"}>{name}</Tab>
            ))}
            <TabTools>
                <HelpIcon />
                <svg width="7" height="7" viewBox="0 0 7 7"><path d="M0 5h6v1.500H0z" fill="#4b628e" /></svg>
                <svg width="7" height="7" viewBox="0 0 7 7" fill="none"><path d="M.5 2.500h5v4h-5zM2 1h4.500v4" stroke="#4b628e" /></svg>
                <svg width="7" height="7" viewBox="0 0 7 7"><path d="M1 1l5 5M6 1L1 6" stroke="#4b628e" strokeWidth="1.500" /></svg>
            </TabTools>
        </TabStrip>
        <Ribbon>
            <RibbonGroup label="Get External Data" width={191}>
                <Stack>
                    <SmallButton type="button"><SmallDocIcon kind="access" />From Access</SmallButton>
                    <SmallButton type="button"><SmallDocIcon kind="web" />From Web</SmallButton>
                    <SmallButton type="button"><SmallDocIcon kind="text" />From Text</SmallButton>
                </Stack>
                <Big icon={<DbPageIcon />} lines={["From Other", "Sources"]} menu="inline" />
                <Divider />
                <Big icon={<DbPageIcon />} lines={["Existing", "Connections"]} />
            </RibbonGroup>
            <RibbonGroup label="Connections" width={115}>
                <Big icon={<RefreshIcon />} lines={["Refresh", "All"]} menu="inline" />
                <Stack>
                    <SmallButton type="button"><SmallDocIcon kind="gear" />Connections</SmallButton>
                    <SmallButton type="button"><SmallDocIcon kind="hand" />Properties</SmallButton>
                    <SmallButton type="button"><LinkIcon />Edit Links</SmallButton>
                </Stack>
            </RibbonGroup>
            <RibbonGroup label="Sort & Filter" width={159}>
                <Stack $even>
                    <button type="button" aria-label="Sort A to Z"><AzIcon down /></button>
                    <button type="button" aria-label="Sort Z to A"><AzIcon /></button>
                </Stack>
                <Big icon={<SortIcon />} lines={["Sort"]} />
                <Divider />
                <Big icon={<FunnelIcon />} lines={["Filter"]} />
                <Stack>
                    <SmallButton type="button"><FunnelSmall kind="clear" />Clear</SmallButton>
                    <SmallButton type="button"><FunnelSmall kind="reapply" />Reapply</SmallButton>
                    <SmallButton type="button"><FunnelSmall kind="advanced" />Advanced</SmallButton>
                </Stack>
            </RibbonGroup>
            <RibbonGroup label="Data Tools" width={188}>
                <Big icon={<TextColumnsIcon />} lines={["Text to", "Columns"]} />
                <Big icon={<DuplicatesIcon />} lines={["Remove", "Duplicates"]} />
                <Stack>
                    <SmallButton type="button"><SmallDocIcon kind="check" />Data Validation <Caret color="#9aa9c2" /></SmallButton>
                    <SmallButton type="button"><SmallDocIcon kind="gear" />Consolidate</SmallButton>
                    <SmallButton type="button"><SmallDocIcon kind="check" />What-If Analysis <Caret color="#9aa9c2" /></SmallButton>
                </Stack>
            </RibbonGroup>
            <RibbonGroup label="Outline" width={139} launcher>
                <Big icon={<GroupIcon kind="group" />} lines={["Group"]} menu="below" />
                <Big icon={<GroupIcon kind="ungroup" />} lines={["Ungroup"]} menu="below" />
                <Big icon={<GroupIcon kind="subtotal" />} lines={["Subtotal"]} />
                <DetailButtons>
                    <DetailIcon />
                    <DetailIcon />
                </DetailButtons>
            </RibbonGroup>
            <RibbonGroup label="Analysis" width={82} enabled start>
                <Stack>
                    <SmallButton type="button"><AnalysisIcon />Data Analysis</SmallButton>
                </Stack>
            </RibbonGroup>
        </Ribbon>
        <FormulaRow>
            <NameBox>
                <input aria-label="Name box" defaultValue="Chart 1" />
                <Caret color="#222" />
            </NameBox>
            <FxBox>fx</FxBox>
            <FormulaField>
                <input aria-label="Formula" defaultValue="=SERIES(,Sheet4!$A$2:$A$8,Sheet4!$B$2:$B$8,1)" />
            </FormulaField>
            <ExpandButton type="button" aria-label="Expand formula bar">
                <svg width="6" height="8" viewBox="0 0 6 8" fill="none"><path d="M0 1l3 2.500L6 1M0 4.500L3 7l3-2.500" stroke="#333" strokeWidth="1.500" /></svg>
            </ExpandButton>
        </FormulaRow>
        <SheetArea>
            <SheetView>
                <Grid>
                    <thead>
                        <tr>
                            <th aria-label="Select all" />
                            {columns.map(c => <th key={c} scope="col">{c}</th>)}
                        </tr>
                    </thead>
                    <tbody>
                        {rows.map(r => (
                            <tr key={r}>
                                <th scope="row">{r}</th>
                                {columns.map((c, i) => <Cell key={c} $head={r === 1}>{cellText(r, i)}</Cell>)}
                            </tr>
                        ))}
                    </tbody>
                </Grid>
                <RangeOutline $left={21} $color="#8a2fa8" $open><i /><i /><i /><i /></RangeOutline>
                <RangeOutline $left={71} $color="#2a2fc4"><i /><i /><i /><i /></RangeOutline>
                <Histogram />
            </SheetView>
            <VScroll>
                <Track>
                    <Arrow />
                    <Thumb $size={437}><svg width="6" height="6" viewBox="0 0 6 6"><path d="M0 .5h6M0 3h6M0 5.500h6" stroke="#6b83ad" /></svg></Thumb>
                    <Space $size={34} />
                    <Arrow dir="down" />
                </Track>
            </VScroll>
        </SheetArea>
        <TabBar>
            <TabNav>
                <svg width="6" height="6" viewBox="0 0 6 6"><path d="M0 0h1v6H0zM6 0v6L2 3z" fill="#2c4984" /></svg>
                <Arrow dir="left" />
                <Arrow dir="right" />
                <svg width="6" height="6" viewBox="0 0 6 6"><path d="M5 0h1v6H5zM0 0v6l4-3z" fill="#2c4984" /></svg>
            </TabNav>
            <SheetTab type="button">Sheet1</SheetTab>
            <SheetTab type="button" $on>Sheet4</SheetTab>
            <SheetTab type="button">Sheet2</SheetTab>
            <SheetTab type="button">Sheet3</SheetTab>
            <SheetTab type="button" aria-label="Insert sheet" $short>
                <svg width="12" height="10" viewBox="0 0 12 10" fill="none"><path d="M3 3h8v4L9 9H3z" fill="#f4f8fe" stroke="#6e8bbc" /><circle cx="3" cy="3" r="2" fill="#eda23a" /></svg>
            </SheetTab>
            <HScroll>
                <SplitHandle />
                <ArrowSlot $w={12}><Arrow dir="left" /></ArrowSlot>
                <Thumb $size={274} $flat>
                    <svg width="6" height="6" viewBox="0 0 6 6"><path d="M.5 0v6M3 0v6M5.500 0v6" stroke="#6b83ad" /></svg>
                </Thumb>
                <Space $size={40} />
                <ArrowSlot $w={15}><Arrow dir="right" /></ArrowSlot>
                <SplitHandle />
            </HScroll>
        </TabBar>
        <StatusBar $active>
            <span>Ready</span>
            <StatusRule />
            <ViewButtons>
                <ViewButton type="button" aria-label="Normal" $on>
                    <svg width="11" height="9" viewBox="0 0 11 9" fill="none"><path d="M.5.5h10v8H.5zM.5 3h10M.5 6h10M4 .5v8M7 .5v8" fill="#fff" stroke="#5f6f8e" /></svg>
                </ViewButton>
                <ViewButton type="button" aria-label="Page layout">
                    <svg width="10" height="9" viewBox="0 0 10 9" fill="none"><path d="M.5.5h9v8h-9z" fill="#b9c8df" stroke="#5f6f8e" /><path d="M3 2h4v5H3z" fill="#fff" stroke="#5f6f8e" /></svg>
                </ViewButton>
                <ViewButton type="button" aria-label="Page break">
                    <svg width="10" height="9" viewBox="0 0 10 9" fill="none"><path d="M.5.5h9v8h-9z" fill="#b9c8df" stroke="#5f6f8e" /><path d="M2 1h2v4H2zM6 1h2v4H6z" fill="#fff" /></svg>
                </ViewButton>
            </ViewButtons>
            <ZoomControl id="excel-zoom" />
            <svg width="8" height="8" viewBox="0 0 8 8" aria-hidden="true"><path d="M6 0h2v2H6zM3 3h2v2H3zM6 3h2v2H6zM0 6h2v2H0zM3 6h2v2H3zM6 6h2v2H6z" fill="#6684b5" /></svg>
        </StatusBar>
    </ExcelWindow>
);

/* ---------- taskbar ---------- */

const TaskBar = styled.nav`
    display: flex;
    align-items: center;
    gap: 3px;
    flex: none;
    height: 32px;
    padding-right: 16px;
    color: #f2f2f2;
    background: linear-gradient(#5a5a5a, #666666);
`;

const Launch = styled.button`
    display: grid;
    place-items: center;
    width: ${props => props.$w || 46}px;
    height: 30px;
`;

const Task = styled.button`
    && {
        display: flex;
        align-items: center;
        gap: 4px;
        width: 127px;
        height: 30px;
        padding: 0 8px;
        text-align: left;
        white-space: nowrap;
        color: #f4f4f4;
        border: 1px solid ${props => (props.$on ? "#c8c8c8" : "#8d8d8d")};
        background: ${props => (props.$on ? "linear-gradient(#a6a6a6, #8d8d8d)" : "#7b7b7b")};
    }
`;

const Tray = styled.div`
    display: flex;
    align-items: center;
    gap: 7px;
    margin-left: auto;
`;

const Clock = styled.div`
    margin-left: 5px;
    text-align: center;
    line-height: 13px;
    color: #fff;
`;

const OfficeFile = ({ word }) => (
    <svg width="25" height="25" viewBox="0 0 25 25" fill="none" aria-hidden="true">
        <path d="M8 2h11l4 4v18H8z" fill="#f6f9fd" stroke="#7fa0d0" />
        {word
            ? <path d="M15 9h6M15 12h6M10 15h11M10 18h11M10 21h11" stroke="#6d90cb" />
            : <path d="M10 13h11v9H10zM10 16h11M10 19h11M13.500 10v12M17.500 10v12" stroke="#5779b4" />}
        <path d="M19 2v4h4" fill="#c5d9f2" stroke="#7fa0d0" />
        <rect x="1" y="3" width="13" height="12" rx="1" fill={word ? "#e0e9f7" : "#a9d79d"} stroke={word ? "#6a8cca" : "#4d9c48"} />
        {word
            ? <path d="M4 6l1.500 6L7.500 7l2 5L11 6" stroke="#274f9c" strokeWidth="1.500" />
            : <path d="M5 6l5 6M10 6l-5 6" stroke="#1f6d2b" strokeWidth="2" />}
    </svg>
);

const Taskbar = () => (
    <TaskBar>
        <Launch type="button" aria-label="Start" $w={39}>
            <svg width="22" height="20" viewBox="0 0 22 20"><path d="M0 3l9-1.500V9H0zM10 1l12-1v9H10zM0 10h9v8l-9-1.500zM10 10h12v10l-12-1.500z" fill="#fff" /></svg>
        </Launch>
        <Launch type="button" aria-label="Home">
            <svg width="24" height="22" viewBox="0 0 24 22"><path d="M12 0L0 12h3v9h6v-7h6v7h6v-9h3l-4-4V2h-3v3z" fill="#fff" /></svg>
        </Launch>
        <Task type="button">
            <svg width="26" height="26" viewBox="0 0 26 26" aria-hidden="true">
                <circle cx="13" cy="13" r="12" fill="#f2c62f" />
                <path d="M13 13L2 8A12 12 0 0 1 24.500 8z" fill="#dc4437" />
                <path d="M13 13L2 7a12 12 0 0 0 9 18z" fill="#3f9f4c" />
                <circle cx="13" cy="13" r="5.500" fill="#fff" />
                <circle cx="13" cy="13" r="4" fill="#4484e0" />
            </svg>
            A web Whiteboar...
        </Task>
        <Launch type="button" aria-label="File Explorer">
            <svg width="26" height="24" viewBox="0 0 26 24" fill="none">
                <path d="M1 4l2-3h7l2 2h11v17H2z" fill="#f4dd86" stroke="#c8a950" />
                <path d="M4 5h17M4 7h17" stroke="#6cb86a" />
                <path d="M1 8h23l-1 14H2z" fill="#f9e9a5" stroke="#d3b860" />
                <path d="M5 22v-7h16v7h-4v-4H9v4z" fill="#6db6e8" stroke="#4592cb" />
            </svg>
        </Launch>
        <Task type="button"><OfficeFile word />Lab #4 BADM 111...</Task>
        <Launch type="button" aria-label="Paint splat">
            <svg width="27" height="27" viewBox="0 0 27 27" fill="none">
                <path d="M4 4l5 3 2-5 3 1-1 5h4l1-5h3l-1 6 5-1 1 3-5 2-1 3 6 2-1 5-4-2-3-1 2 5-4 1-3-6-3 1-5 2 1-4 2-3-5-1-1-3 6-1 2-2-6-1z" fill="#f0141c" stroke="#fbd8d8" strokeWidth=".7" />
                <path d="M5 3l6 3-5 3z" fill="#8e0d12" />
            </svg>
        </Launch>
        <Task type="button"><OfficeFile />Lab #4 - extra dat...</Task>
        <Task type="button" $on><OfficeFile />Book1</Task>
        <Task type="button">
            <svg width="25" height="25" viewBox="0 0 25 25" fill="none" aria-hidden="true">
                <path d="M2 2h21v20H2z" fill="#777" stroke="#000" strokeWidth="2" />
                <path d="M2 2h21v20H2z" stroke="#fff" strokeWidth="2" strokeDasharray="2 2" />
                <path d="M1 22h17v3H1z" fill="#000" />
            </svg>
            Screen Recorder
        </Task>
        <Tray>
            <svg width="24" height="14" viewBox="0 0 24 14" fill="none">
                <path d="M1 1h22v12H1z" stroke="#fff" strokeWidth="1.500" />
                <path d="M3 4h18M3 7h18" stroke="#fff" strokeWidth="2" strokeDasharray="2 1" />
                <path d="M6 10.500h12" stroke="#fff" strokeWidth="1.500" />
            </svg>
            <svg width="26" height="24" viewBox="0 0 26 24" fill="none">
                <path d="M14 18a6 6 0 1 1 0-4H5" stroke="#3aa7e0" strokeWidth="3" />
                <path d="M15 0l9 17H6z" fill="#f8b62b" />
                <path d="M15 5v6M15 13v2" stroke="#fff" strokeWidth="2" />
            </svg>
            <Arrow color="#fff" />
            <svg width="14" height="14" viewBox="0 0 14 14"><path d="M1 1h2v13H1zM3 1h5v2h5l-2 3 1 3H7V8H3z" fill="#fff" /></svg>
            <svg width="13" height="13" viewBox="0 0 13 13"><path d="M3 0l3 2-3 2-3-2zM10 0l3 2-3 2-3-2zM3 4l3 2-3 2-3-2zM10 4l3 2-3 2-3-2zM6 8l3 2-3 2-3-2z" fill="#fff" /><circle cx="9" cy="9" r="3.500" fill="#45b04b" /><path d="M7 9l2 1.500 2-3" stroke="#fff" fill="none" /></svg>
            <svg width="12" height="14" viewBox="0 0 12 14" fill="none"><path d="M6.500 3.500h5v9h-5zM8 1.500h2" stroke="#fff" strokeWidth="1.500" /><path d="M8 5h2v7H8zM1 2v3M4 2v3M0 5h5v3H3v6H2V8H0z" fill="#fff" stroke="#fff" strokeWidth=".5" /></svg>
            <svg width="12" height="12" viewBox="0 0 12 12"><path d="M0 9h2v3H0zM2.500 7h2v5h-2zM5 5h2v7H5zM7.500 2.500h2V12h-2zM10 0h2v12h-2z" fill="#fff" /></svg>
            <svg width="12" height="12" viewBox="0 0 12 12" fill="none"><path d="M0 4h2l3-3v10L2 8H0z" fill="#fff" /><path d="M7 4c1 1 1 3 0 4M9 2c2 2 2 6 0 8" stroke="#fff" /></svg>
            <Clock>ENG<br />US</Clock>
            <Clock>8:22 PM<br />2017-03-21</Clock>
        </Tray>
    </TaskBar>
);

const Watermark = styled.aside`
    position: absolute;
    left: 13px;
    bottom: 11px;
    z-index: 5;
    color: #fff;
    font-weight: 700;
    text-shadow: 1px 1px 1px #222, 0 0 2px #333;
    p {
        margin: 0;
        line-height: 14px;
    }
    div {
        display: flex;
        align-items: center;
        gap: 3px;
        height: 24px;
        font-size: 15px;
    }
`;

export default function App() {
    return (
        <>
            <GlobalStyle />
            <Desktop>
                <Word />
                <Taskbar />
                <Excel />
                <Watermark>
                    <p>RECORDED WITH</p>
                    <div>
                        SCREENCAST
                        <svg width="28" height="28" viewBox="0 0 28 28" fill="none" aria-hidden="true">
                            <circle cx="14" cy="14" r="12" stroke="#2f5f8c" strokeWidth="2.500" fill="#2a5680" fillOpacity=".25" />
                            <circle cx="14" cy="14" r="5" fill="#3d86cf" />
                        </svg>
                        MATIC
                    </div>
                </Watermark>
            </Desktop>
        </>
    );
}
